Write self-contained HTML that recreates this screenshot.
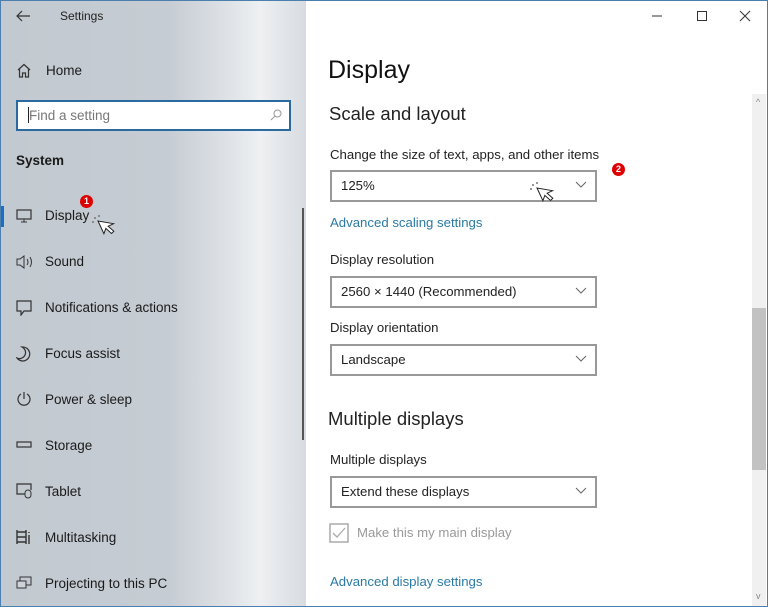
<!DOCTYPE html>
<html><head><style>
body{margin:0;width:768px;height:607px;overflow:hidden;font-family:"Liberation Sans",sans-serif;position:relative;background:#fff}
.win{position:absolute;left:0;top:0;width:766px;height:605px;border:1px solid #4a7fae;overflow:hidden}
.in{position:absolute;left:-1px;top:-1px;width:768px;height:607px}
.left{position:absolute;left:1px;top:1px;width:305px;height:605px;background:linear-gradient(90deg,#c2c9d0 0%,#c6ccd3 55%,#dfe3e7 75%,#eef0f2 85%,#d7dce1 100%)}
.t{position:absolute;white-space:nowrap;color:#1a1a1a}
.nav{font-size:13.5px}
.ico{position:absolute;left:16px}
.right{position:absolute;left:306px;top:1px;width:461px;height:605px;background:#fff}
.dd{position:absolute;left:330px;width:263px;height:28px;border:2px solid #999;background:#fff}
.dd span{position:absolute;left:9px;top:6px;font-size:13.2px;color:#222}
.dd svg{position:absolute;right:8px;top:9px}
.lbl{font-size:13.2px;color:#222}
.link{font-size:13.2px;color:#2a7aa6}
.h2{font-size:18.5px;color:#222}
.badge{position:absolute;width:13px;height:13px;border-radius:50%;background:#d00;color:#fff;font-size:9px;font-weight:bold;text-align:center;line-height:13px}
</style></head><body>
<div class="win"><div class="in">
<div class="left"></div>
<div class="right">
<div style="position:absolute;left:446px;top:93px;width:14px;height:512px;background:#f0f0f0"></div>
<div style="position:absolute;left:446px;top:307px;width:14px;height:162px;background:#c2c2c2"></div>
<div class="t" style="left:450px;top:96px;font-size:9px;color:#888">^</div>
<div class="t" style="left:450px;top:590px;font-size:9px;color:#888">v</div>
</div>
<svg class="ico" style="left:15px;top:10px" width="16" height="12"><path d="M15 6H2M7 1L2 6l5 5" stroke="#333" fill="none" stroke-width="1.2"/></svg>
<div class="t" style="left:60px;top:9px;font-size:12px;color:#222">Settings</div>
<svg class="ico" style="top:63px" width="16" height="15"><path d="M2 7L8 1.5 14 7M3.5 6v8h3v-4h3v4h3V6" stroke="#333" fill="none" stroke-width="1.2"/></svg>
<div class="t nav" style="left:46px;top:63px">Home</div>
<div style="position:absolute;left:16px;top:100px;width:271px;height:27px;border:2px solid #2b6aa0;background:#fff"></div>
<div style="position:absolute;left:28px;top:107px;width:1px;height:16px;background:#222"></div>
<div class="t" style="left:29px;top:108px;font-size:13.5px;color:#777">Find a setting</div>
<svg style="position:absolute;left:270px;top:109px" width="12" height="12"><circle cx="7.5" cy="4.5" r="3.5" stroke="#999" fill="none"/><path d="M5 7L1 11" stroke="#999"/></svg>
<div class="t" style="left:16px;top:153px;font-size:13.5px;font-weight:bold">System</div>
<div style="position:absolute;left:0;top:206px;width:4px;height:21px;background:#1a6fc4"></div>
<svg class="ico" style="top:209px" width="16" height="14"><rect x="1" y="1" width="14" height="9" stroke="#333" fill="none" stroke-width="1.2"/><path d="M8 10v3M5 13h6" stroke="#333"/></svg>
<div class="t nav" style="left:45px;top:208px">Display</div>
<div class="badge" style="left:80px;top:195px">1</div>
<svg style="position:absolute;left:92px;top:215px" width="24" height="26"><path d="M6 6l0 14 4-4 3 7 3-1-3-7 6 0z" fill="#fff" stroke="#222" transform="rotate(-25 6 6)"/><circle cx="3" cy="3" r="1" fill="#777"/><circle cx="1" cy="7" r="1" fill="#777"/><circle cx="7" cy="1" r="1" fill="#777"/></svg>
<svg class="ico" style="top:255px" width="18" height="14"><path d="M1 4h3l4-3v12l-4-3H1z" stroke="#333" fill="none"/><path d="M11 4q2 3 0 6M14 2q3 5 0 10" stroke="#333" fill="none"/></svg>
<div class="t nav" style="left:45px;top:254px">Sound</div>
<svg class="ico" style="top:300px" width="16" height="16"><path d="M1 1h14v10H8l-3 4v-4H1z" stroke="#333" fill="none" stroke-width="1.2"/></svg>
<div class="t nav" style="left:45px;top:300px">Notifications &amp; actions</div>
<svg class="ico" style="top:346px" width="16" height="16"><path d="M6 1a7 7 0 1 1-5 11 6 6 0 0 0 5-11z" stroke="#333" fill="none" stroke-width="1.2"/></svg>
<div class="t nav" style="left:45px;top:346px">Focus assist</div>
<svg class="ico" style="top:391px" width="16" height="16"><path d="M5 3a6 6 0 1 0 6 0M8 1v7" stroke="#333" fill="none" stroke-width="1.2"/></svg>
<div class="t nav" style="left:45px;top:392px">Power &amp; sleep</div>
<svg class="ico" style="top:441px" width="16" height="8"><rect x="1" y="1" width="14" height="5" stroke="#333" fill="none" stroke-width="1.2"/></svg>
<div class="t nav" style="left:45px;top:438px">Storage</div>
<svg class="ico" style="top:483px" width="16" height="16"><path d="M9 11H1V1h14v6" stroke="#333" fill="none" stroke-width="1.2"/><rect x="9" y="7" width="6" height="8" rx="3" stroke="#333" fill="none"/></svg>
<div class="t nav" style="left:45px;top:484px">Tablet</div>
<svg class="ico" style="top:529px" width="16" height="16"><path d="M1 1v14M10 1v14M1 3h9M1 13h9M1 8h9M13 3v1M13 6v9" stroke="#333" fill="none" stroke-width="1.4"/></svg>
<div class="t nav" style="left:45px;top:530px">Multitasking</div>
<svg class="ico" style="top:576px" width="16" height="14"><rect x="4" y="1" width="11" height="8" stroke="#333" fill="none"/><rect x="1" y="5" width="9" height="7" stroke="#333" fill="#cdd3d9"/></svg>
<div class="t nav" style="left:45px;top:576px">Projecting to this PC</div>
<div style="position:absolute;left:302px;top:208px;width:2px;height:232px;background:#555"></div>
<svg style="position:absolute;left:652px;top:10px" width="100" height="14"><path d="M0 6h10" stroke="#333"/><rect x="45.5" y="1.5" width="9" height="9" stroke="#333" fill="none"/><path d="M88 1l10 10M98 1L88 11" stroke="#333"/></svg>
<div class="t" style="left:328px;top:56px;font-size:25px;color:#111">Display</div>
<div class="t h2" style="left:329px;top:103px">Scale and layout</div>
<div class="t lbl" style="left:330px;top:147px">Change the size of text, apps, and other items</div>
<div class="dd" style="top:170px"><span>125%</span><svg width="12" height="8"><path d="M1 1l5 5 5-5" stroke="#666" fill="none"/></svg></div>
<div class="badge" style="left:612px;top:163px">2</div>
<svg style="position:absolute;left:530px;top:182px" width="26" height="28"><path d="M7 6l0 14 4-4 3 7 3-1-3-7 6 0z" fill="#fff" stroke="#222" transform="rotate(-25 7 6)"/><circle cx="3" cy="3" r="1" fill="#777"/><circle cx="1" cy="7" r="1" fill="#777"/><circle cx="7" cy="1" r="1" fill="#777"/></svg>
<div class="t link" style="left:330px;top:215px">Advanced scaling settings</div>
<div class="t lbl" style="left:330px;top:252px">Display resolution</div>
<div class="dd" style="top:276px"><span>2560 × 1440 (Recommended)</span><svg width="12" height="8"><path d="M1 1l5 5 5-5" stroke="#666" fill="none"/></svg></div>
<div class="t lbl" style="left:330px;top:320px">Display orientation</div>
<div class="dd" style="top:344px"><span>Landscape</span><svg width="12" height="8"><path d="M1 1l5 5 5-5" stroke="#666" fill="none"/></svg></div>
<div class="t h2" style="left:328px;top:408px">Multiple displays</div>
<div class="t lbl" style="left:330px;top:452px">Multiple displays</div>
<div class="dd" style="top:476px"><span>Extend these displays</span><svg width="12" height="8"><path d="M1 1l5 5 5-5" stroke="#666" fill="none"/></svg></div>
<svg style="position:absolute;left:329px;top:523px" width="20" height="20"><rect x="1" y="1" width="18" height="18" stroke="#aaa" fill="none" stroke-width="1.5"/><path d="M4 10l4 4 8-9" stroke="#aaa" fill="none" stroke-width="1.3"/></svg>
<div class="t" style="left:357px;top:525px;font-size:13.2px;color:#999">Make this my main display</div>
<div class="t link" style="left:330px;top:574px">Advanced display settings</div>
</div></div>
</body></html>
